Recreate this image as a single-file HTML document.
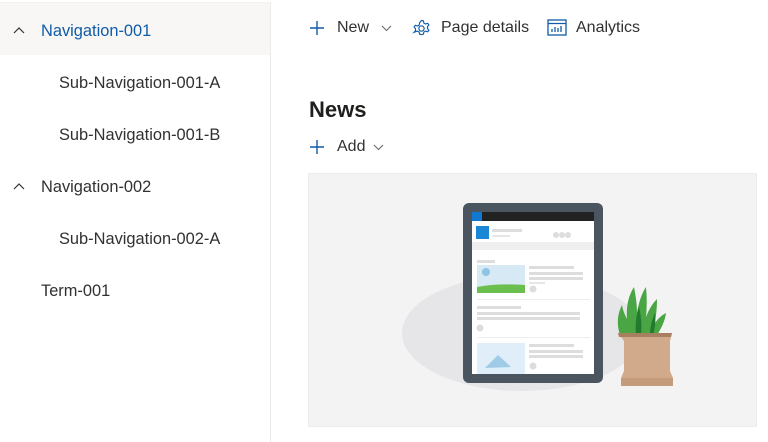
<!DOCTYPE html>
<html><head><style>
*{margin:0;padding:0;box-sizing:border-box}
body{width:768px;height:442px;background:#fff;font-family:"Segoe UI","Liberation Sans",sans-serif;color:#323130;position:relative;overflow:hidden}
.nav{position:absolute;left:0;top:2px;width:271px;height:440px;border-right:1px solid #edebe9;border-top:1px solid #f3f2f1}
.item{position:absolute;left:0;width:270px;height:52px;font-size:16.4px;line-height:56px}
.sel{background:#f8f7f5;color:#0f5ca8}
.chev{position:absolute;left:13px;top:23px}
.t{position:absolute;font-size:16px;white-space:nowrap}
</style></head><body>
<div class="nav">
<div class="item sel" style="top:0"><svg class="chev" width="12" height="8" viewBox="0 0 12 8"><path d="M1 7L6 2l5 5" fill="none" stroke="#333" stroke-width="1.2"/></svg><span style="position:absolute;left:41px">Navigation-001</span></div>
<div class="item" style="top:52px"><span style="position:absolute;left:59px">Sub-Navigation-001-A</span></div>
<div class="item" style="top:104px"><span style="position:absolute;left:59px">Sub-Navigation-001-B</span></div>
<div class="item" style="top:156px"><svg class="chev" width="12" height="8" viewBox="0 0 12 8"><path d="M1 7L6 2l5 5" fill="none" stroke="#333" stroke-width="1.2"/></svg><span style="position:absolute;left:41px">Navigation-002</span></div>
<div class="item" style="top:208px"><span style="position:absolute;left:59px">Sub-Navigation-002-A</span></div>
<div class="item" style="top:260px"><span style="position:absolute;left:41px">Term-001</span></div>
</div>

<svg style="position:absolute;left:309px;top:20px" width="16" height="16" viewBox="0 0 16 16"><path d="M8 1v14M1 8h14" stroke="#0f5ca8" stroke-width="1.4"/></svg>
<div class="t" style="left:337px;top:19px">New</div>
<svg style="position:absolute;left:381px;top:25px" width="11" height="7" viewBox="0 0 11 7"><path d="M1 1l4.5 4.5L10 1" fill="none" stroke="#666" stroke-width="1"/></svg>
<svg style="position:absolute;left:412px;top:19px" width="19" height="19" viewBox="0 0 20 20"><path d="M10 1.5l2 .5.5 2.3 1.8 1 2.2-.8 1.3 1.7-1.5 1.8v2l1.5 1.8-1.3 1.7-2.2-.8-1.8 1-.5 2.3-2 .5-2-.5-.5-2.3-1.8-1-2.2.8L2.2 14l1.5-1.8v-2L2.2 8.3 3.5 6.6l2.2.8 1.8-1 .5-2.3z" fill="none" stroke="#0f5ca8" stroke-width="1.2"/><circle cx="10" cy="10" r="2.8" fill="none" stroke="#0f5ca8" stroke-width="1.2"/></svg>
<div class="t" style="left:441px;top:19px">Page details</div>
<svg style="position:absolute;left:547px;top:19px" width="20" height="17" viewBox="0 0 20 17"><rect x="1" y="1" width="18" height="15" fill="none" stroke="#0f5ca8" stroke-width="1.3"/><path d="M1 4.5h18" stroke="#0f5ca8" stroke-width="1.3"/><path d="M5 13V10M8 13V8M11 13V9M14 13V7" stroke="#0f5ca8" stroke-width="1.3"/></svg>
<div class="t" style="left:576px;top:19px">Analytics</div>

<div class="t" style="left:309px;top:97px;font-size:22px;font-weight:bold;color:#201f1e">News</div>
<svg style="position:absolute;left:309px;top:139px" width="16" height="16" viewBox="0 0 16 16"><path d="M8 1v14M1 8h14" stroke="#0f5ca8" stroke-width="1.4"/></svg>
<div class="t" style="left:337px;top:138px">Add</div>
<svg style="position:absolute;left:373px;top:144px" width="11" height="7" viewBox="0 0 11 7"><path d="M1 1l4.5 4.5L10 1" fill="none" stroke="#666" stroke-width="1"/></svg>

<div style="position:absolute;left:308px;top:173px;width:449px;height:254px;background:#f3f3f3;border:1px solid #ececec"></div>
<svg style="position:absolute;left:308px;top:173px" width="449" height="254" viewBox="308 173 449 254">
<ellipse cx="522" cy="333" rx="120" ry="58" fill="#e6e6e8"/>
<rect x="463" y="203" width="140" height="180" rx="6" fill="#4a5560"/>
<rect x="472" y="212" width="122" height="162" fill="#fff"/>
<rect x="472" y="212" width="122" height="9" fill="#222"/>
<rect x="472" y="212" width="10" height="9" fill="#1078d0"/>
<rect x="476" y="226" width="13" height="13" fill="#1a86d6"/>
<rect x="492" y="229" width="30" height="3" fill="#ddd"/>
<rect x="492" y="235" width="18" height="2" fill="#e6e6e6"/>
<circle cx="556" cy="235" r="3" fill="#ddd"/><circle cx="562" cy="235" r="3" fill="#ddd"/><circle cx="568" cy="235" r="3" fill="#ddd"/>
<rect x="472" y="242" width="122" height="8" fill="#efefef"/>
<rect x="477" y="260" width="18" height="3" fill="#ddd"/>
<rect x="477" y="265" width="48" height="28" fill="#d6e9f5"/>
<path d="M477 293v-6q20-4 48-2v8z" fill="#6bbf4e"/>
<circle cx="486" cy="272" r="4" fill="#8ec4e4"/>
<rect x="529" y="266" width="45" height="3" fill="#ddd"/><rect x="529" y="272" width="54" height="3" fill="#ddd"/><rect x="529" y="277" width="54" height="3" fill="#ddd"/><rect x="529" y="282" width="16" height="2" fill="#e6e6e6"/>
<circle cx="533" cy="289" r="3.5" fill="#ddd"/>
<rect x="477" y="299" width="113" height="1" fill="#eee"/>
<rect x="477" y="306" width="44" height="3" fill="#ddd"/><rect x="477" y="312" width="103" height="3" fill="#ddd"/><rect x="477" y="317" width="103" height="3" fill="#ddd"/>
<circle cx="480" cy="328" r="3.5" fill="#ddd"/>
<rect x="477" y="337" width="113" height="1" fill="#eee"/>
<rect x="477" y="343" width="48" height="31" fill="#dfeef8"/>
<path d="M485 368l13-13 13 12z" fill="#9fcbe8"/>
<rect x="529" y="344" width="45" height="3" fill="#ddd"/><rect x="529" y="350" width="54" height="3" fill="#ddd"/><rect x="529" y="355" width="54" height="3" fill="#ddd"/>
<circle cx="533" cy="366" r="3.5" fill="#ddd"/>
<path d="M620 335c-4-12-2-22 2-30 1 6 3 10 5 14-1-14 2-24 7-32 2 10 3 18 3 26 2-12 5-20 9-26 1 10 1 20 0 30 3-8 7-14 11-18 0 10-1 18-3 26 3-6 8-10 12-12-1 8-5 16-9 22z" fill="#4aa544"/>
<path d="M636 335c-1-10 0-20 3-28 2 8 3 18 2 28zM650 335c0-8 2-16 5-22 1 8 0 16-2 22z" fill="#237a2e"/>
<path d="M618 333h54l-2 8v30l3 7v8h-52v-8l3-7v-30z" fill="#d0aa8b"/>
<path d="M618 333h54l-1 4h-52z" fill="#a9805f"/>
<path d="M621 378h52v8h-52z" fill="#c49c7c"/>
</svg>
</body></html>
